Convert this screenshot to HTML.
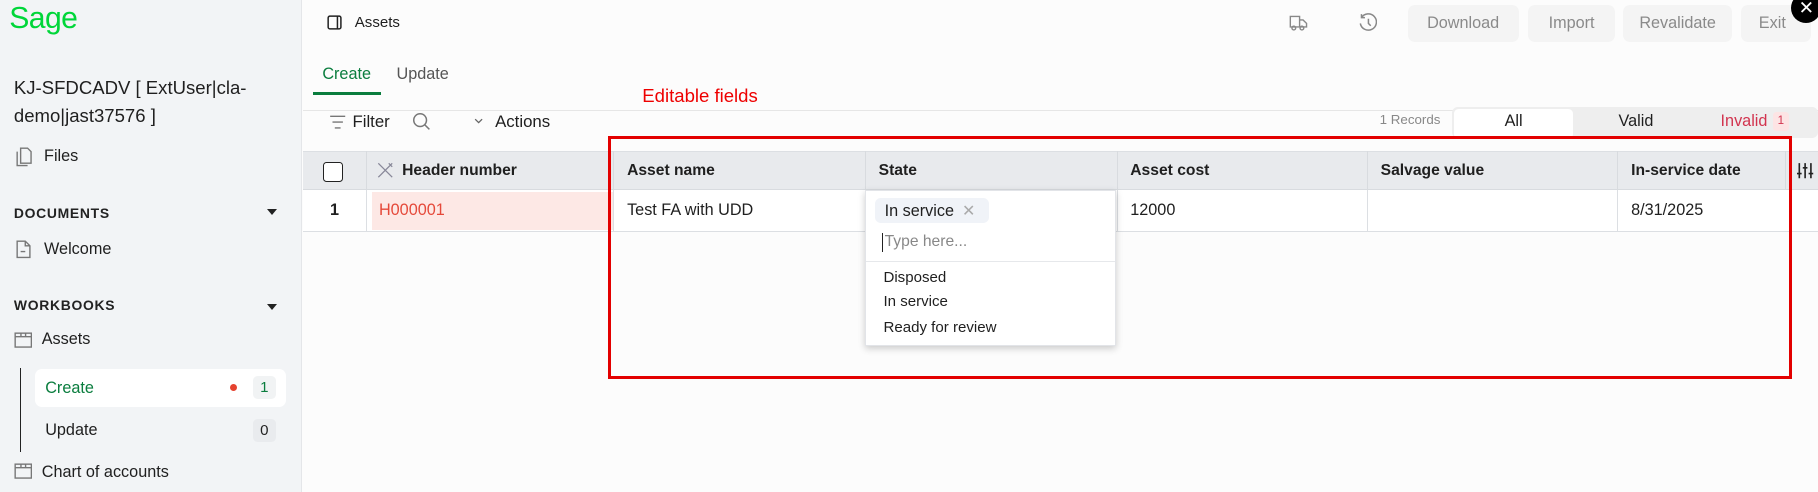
<!DOCTYPE html>
<html><head><meta charset="utf-8"><style>
html,body{margin:0;padding:0;overflow:hidden;background:#fcfcfc}
body{width:1818px;height:491px}
#r{position:absolute;left:0;top:0;width:1568px;height:424px;zoom:1.1594;font-family:"Liberation Sans",sans-serif;color:#1f1f1f;font-size:14px}
.a{position:absolute;white-space:nowrap}
.sb{left:0;top:0;width:260px;height:424px;background:#f2f4f6;border-right:1px solid #e4e6e9}
.btn{position:absolute;top:4px;height:32px;background:#f4f4f4;border-radius:6px;color:#8a8a8a;font-size:14px;line-height:32px;text-align:center}
.th{position:absolute;top:130px;height:34px;line-height:34px;font-weight:bold;font-size:13.5px;border-left:1px solid #d8dbdf;padding-left:11px;box-sizing:border-box}
.td{position:absolute;top:164px;height:36px;line-height:36px;font-size:14px;border-left:1px solid #dcdfe3;padding-left:11px;box-sizing:border-box}
</style></head><body><div id="r">
<div class="a sb"></div>
<div class="a" style="left:8px;top:2px;font-size:26px;color:#00d639;letter-spacing:-0.5px">Sage</div>
<div class="a" style="left:12px;top:64px;font-size:16px;line-height:24px">KJ-SFDCADV [ ExtUser|cla-<br>demo|jast37576 ]</div>
<svg class="a" style="left:14px;top:127px" width="14" height="17" viewBox="0 0 14 17" fill="none" stroke="#777" stroke-width="1.2"><path d="M4 1h6l3 3v10H4z M1 4v12h9"/></svg>
<div class="a" style="left:38px;top:127px;font-size:14px">Files</div>
<div class="a" style="left:12px;top:177px;font-size:12px;font-weight:bold;letter-spacing:.6px;color:#222">DOCUMENTS</div>
<div class="a" style="left:230px;top:180px;border:5px solid transparent;border-top:6px solid #222;border-bottom:0"></div>
<svg class="a" style="left:14px;top:207px" width="13" height="16" viewBox="0 0 13 16" fill="none" stroke="#777" stroke-width="1.2"><path d="M1 1h7l4 4v10H1z M8 1v4h4 M4 10h4"/></svg>
<div class="a" style="left:38px;top:207px;font-size:14px">Welcome</div>
<div class="a" style="left:12px;top:256px;font-size:12px;font-weight:bold;letter-spacing:.6px;color:#222">WORKBOOKS</div>
<div class="a" style="left:230px;top:262px;border:5px solid transparent;border-top:6px solid #222;border-bottom:0"></div>
<svg class="a" style="left:12px;top:286px" width="16" height="14" viewBox="0 0 16 14" fill="none" stroke="#777" stroke-width="1.2"><rect x="1" y="1" width="14" height="12"/><path d="M1 4h14 M6 1v3 M10 1v3"/></svg>
<div class="a" style="left:36px;top:285px;font-size:14px">Assets</div>
<div class="a" style="left:17px;top:317px;width:1px;height:73px;background:#222"></div>
<div class="a" style="left:30px;top:318px;width:217px;height:33px;background:#fff;border-radius:6px"></div>
<div class="a" style="left:39px;top:327px;font-size:14px;color:#0a7d3e">Create</div>
<div class="a" style="left:198px;top:331px;width:6px;height:6px;border-radius:3px;background:#e5422f"></div>
<div class="a" style="left:218px;top:324px;width:20px;height:20px;background:#f1f3f4;border-radius:4px;text-align:center;line-height:20px;font-size:13px;color:#0a7d3e">1</div>
<div class="a" style="left:39px;top:363px;font-size:14px">Update</div>
<div class="a" style="left:218px;top:361px;width:20px;height:20px;background:#e9ebee;border-radius:4px;text-align:center;line-height:20px;font-size:13px">0</div>
<svg class="a" style="left:12px;top:399px" width="16" height="14" viewBox="0 0 16 14" fill="none" stroke="#777" stroke-width="1.2"><rect x="1" y="1" width="14" height="12"/><path d="M1 4h14 M6 1v3 M10 1v3"/></svg>
<div class="a" style="left:36px;top:399px;font-size:14px">Chart of accounts</div>

<svg class="a" style="left:282px;top:13px" width="13" height="13" viewBox="0 0 13 13" fill="none" stroke="#222" stroke-width="1.3"><rect x="1" y="1" width="11" height="11" rx="1.5"/><path d="M9 1v11"/></svg>
<div class="a" style="left:306px;top:12px;font-size:13px">Assets</div>
<svg class="a" style="left:1111px;top:11px" width="17" height="16" viewBox="0 0 17 16" fill="none" stroke="#888" stroke-width="1.2"><path d="M2 3h8v9H2z M10 6h3l3 3v3h-6"/><circle cx="5" cy="13" r="1.6"/><circle cx="12" cy="13" r="1.6"/></svg>
<svg class="a" style="left:1171px;top:11px" width="17" height="17" viewBox="0 0 17 17" fill="none" stroke="#888" stroke-width="1.3"><path d="M3 4a7 7 0 1 1-1 5 M3 1v3h3 M9 5v4l2 2"/></svg>
<div class="btn" style="left:1214px;width:96px">Download</div>
<div class="btn" style="left:1318px;width:75px">Import</div>
<div class="btn" style="left:1400px;width:94px">Revalidate</div>
<div class="btn" style="left:1502px;width:60px;text-align:left;padding-left:15px;box-sizing:border-box">Exit</div>
<div class="a" style="left:1545px;top:-6px;width:26px;height:26px;border-radius:13px;background:#000;color:#fff;text-align:center;line-height:26px;font-size:16px">✕</div>

<div class="a" style="left:278px;top:56px;font-size:14px;color:#0a7d3e">Create</div>
<div class="a" style="left:342px;top:56px;font-size:14px;color:#555">Update</div>
<div class="a" style="left:270px;top:79px;width:59px;height:3px;background:#0a7d3e"></div>
<div class="a" style="left:261px;top:95px;width:1307px;height:1px;background:#e6e6e6"></div>
<div class="a" style="left:554px;top:73px;font-size:16px;color:#e00">Editable fields</div>
<svg class="a" style="left:284px;top:98px" width="15" height="14" viewBox="0 0 15 14" stroke="#777" stroke-width="1.2"><path d="M1 2h13 M3 7h9 M5 12h5"/></svg>
<div class="a" style="left:304px;top:97px;font-size:14.5px">Filter</div>
<svg class="a" style="left:355px;top:97px" width="16" height="16" viewBox="0 0 16 16" fill="none" stroke="#777" stroke-width="1.3"><circle cx="7" cy="7" r="5.5"/><path d="M11 11l4 4"/></svg>
<svg class="a" style="left:409px;top:102px" width="8" height="6" viewBox="0 0 8 6" fill="none" stroke="#666" stroke-width="1.1"><path d="M1 1l3 3 3-3"/></svg>
<div class="a" style="left:427px;top:97px;font-size:14.5px">Actions</div>
<div class="a" style="left:1190px;top:97px;font-size:11.5px;color:#888">1 Records</div>
<div class="a" style="left:1252px;top:92px;width:316px;height:27px;background:#eeeeee;border-radius:5px"></div>
<div class="a" style="left:1254px;top:94px;width:103px;height:26px;background:#fff;border-radius:4px;text-align:center;line-height:22px;font-size:14px">All</div>
<div class="a" style="left:1396px;top:97px;font-size:14px">Valid</div>
<div class="a" style="left:1484px;top:97px;font-size:14px;color:#d2344f">Invalid</div>
<div class="a" style="left:1529px;top:97px;width:14px;height:16px;background:#fde4e4;border-radius:3px;font-size:10px;color:#d2344f;text-align:center;line-height:16px">1</div>

<div class="a" style="left:261px;top:130px;width:1307px;height:34px;background:#e8eaed;border-top:1px solid #dcdfe3;border-bottom:1px solid #d8dbdf;box-sizing:border-box"></div>
<div class="a" style="left:261px;top:164px;width:1307px;height:36px;background:#fff;border-bottom:1px solid #dcdfe3;box-sizing:border-box"></div>
<div class="a" style="left:279px;top:140px;width:15px;height:15px;border:1.3px solid #222;border-radius:3px;background:#fff"></div>
<div class="th" style="left:316px;width:213px;padding-left:30px">Header number</div>
<svg class="a" style="left:324px;top:139px" width="16" height="16" viewBox="0 0 16 16" fill="none" stroke="#889" stroke-width="1.1"><path d="M2 2l12 12 M14 2L4 12l-2 2 M11 2l3 3"/></svg>
<div class="th" style="left:529px;width:217px">Asset name</div>
<div class="th" style="left:746px;width:217px">State</div>
<div class="th" style="left:963px;width:216px">Asset cost</div>
<div class="th" style="left:1179px;width:216px">Salvage value</div>
<div class="th" style="left:1395px;width:145px">In-service date</div>
<div class="th" style="left:1540px;width:28px;padding-left:9px;font-weight:normal">
<svg width="15" height="15" viewBox="0 0 15 15" stroke="#222" stroke-width="1.4" style="vertical-align:middle"><path d="M2 1v13 M7 1v13 M12 1v13 M0 10h4 M5 5h4 M10 10h4"/></svg></div>
<div class="td" style="left:261px;width:55px;border:0;text-align:center;padding:0;font-weight:bold">1</div>
<div class="td" style="left:316px;width:213px;padding-left:4px"><div style="background:#fde8e5;color:#e5493a;height:32px;margin-top:2px;line-height:32px;padding-left:6px">H000001</div></div>
<div class="td" style="left:529px;width:217px">Test FA with UDD</div>
<div class="td" style="left:963px;width:216px">12000</div>
<div class="td" style="left:1179px;width:216px"></div>
<div class="td" style="left:1395px;width:145px">8/31/2025</div>

<div class="a" style="left:746px;top:164px;width:217px;height:134px;background:#fff;box-shadow:0 2px 6px rgba(0,0,0,.2);border:1px solid #e2e4e8;box-sizing:border-box"></div>
<div class="a" style="left:755px;top:171px;width:98px;height:21px;background:#f0f3f8;border-radius:5px"></div>
<div class="a" style="left:763px;top:173px;font-size:14px">In service <span style="color:#aaa;margin-left:3px">✕</span></div>
<div class="a" style="left:761px;top:201px;width:1px;height:16px;background:#222"></div>
<div class="a" style="left:763px;top:201px;font-size:13.5px;color:#888">Type here...</div>
<div class="a" style="left:747px;top:225px;width:215px;height:1px;background:#e6e8eb"></div>
<div class="a" style="left:762px;top:232px;font-size:13px">Disposed</div>
<div class="a" style="left:762px;top:253px;font-size:13px">In service</div>
<div class="a" style="left:762px;top:275px;font-size:13px">Ready for review</div>

<div class="a" style="left:524px;top:117px;width:1022px;height:210px;border:3px solid #e30000;box-sizing:border-box"></div>
</div></body></html>
